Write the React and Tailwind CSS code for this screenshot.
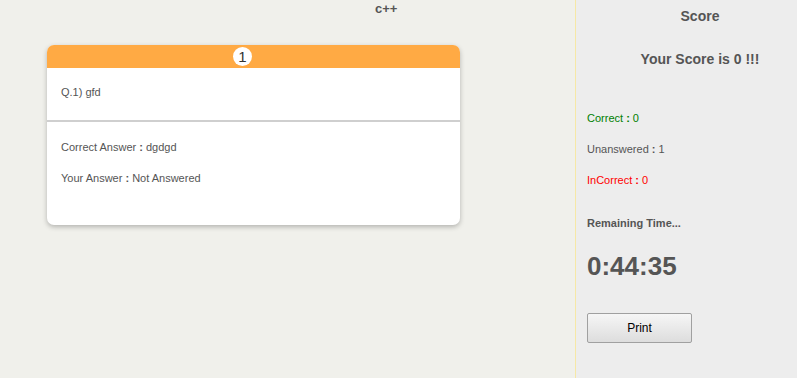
export default function App() {
  return (
    <div className="flex w-[797px] h-[378px] bg-[#f0f0eb] text-[#555] overflow-hidden" style={{ fontFamily: '"Liberation Sans", Arial, sans-serif' }}>
      {/* Main */}
      <div className="w-[575px] shrink-0">
        <div className="pt-[1px] pl-[375px] text-[13px] font-bold leading-[16px] text-[#555]">c++</div>

        <div className="ml-[47px] mt-[28px] w-[413px] rounded-[7px] bg-white shadow-[0_2px_5px_rgba(0,0,0,0.25)] overflow-hidden">
          <div className="h-[23px] bg-[#ffaa44] flex items-center pl-[186px]">
            <div className="w-[19px] h-[19px] rounded-full bg-white flex items-center justify-center text-[15px] leading-none text-[#333]">1</div>
          </div>
          <div className="h-[52px] pl-[14px] pt-[18px] text-[11px] leading-[13px]">Q.1) gfd</div>
          <div className="h-[2px] bg-[#cfcfcf]" />
          <div className="pl-[14px] pt-[19px] pb-[40px] text-[11px] leading-[13px]">
            <p>Correct Answer <b>:</b> dgdgd</p>
            <p className="mt-[18px]">Your Answer <b>:</b> Not Answered</p>
          </div>
        </div>
      </div>

      {/* Sidebar */}
      <div className="flex-1 bg-[#ededed] border-l border-[#f6e8a6] pl-[11px]">
        <div className="pl-[16px] text-center text-[14px] font-bold leading-[16px] pt-[8px]">Score</div>
        <div className="pl-[16px] text-center text-[14px] font-bold leading-[16px] mt-[27px]">Your Score is 0 !!!</div>

        <div className="text-[11px] leading-[13px] mt-[45px]">
          <p className="text-[#008000]">Correct <b>:</b> 0</p>
          <p className="mt-[18px]">Unanswered <b>:</b> 1</p>
          <p className="mt-[18px] text-[#ff0000]">InCorrect <b>:</b> 0</p>
        </div>

        <div className="mt-[30px] text-[11px] font-bold leading-[13px]">Remaining Time...</div>
        <div className="mt-[21px] text-[26px] font-bold leading-[30px]">0:44:35</div>

        <button className="mt-[32px] w-[105px] h-[30px] border border-[#a0a0a0] rounded-[2px] bg-gradient-to-b from-[#f6f6f6] to-[#dddddd] text-[12px] text-black">
          Print
        </button>
      </div>
    </div>
  );
}
